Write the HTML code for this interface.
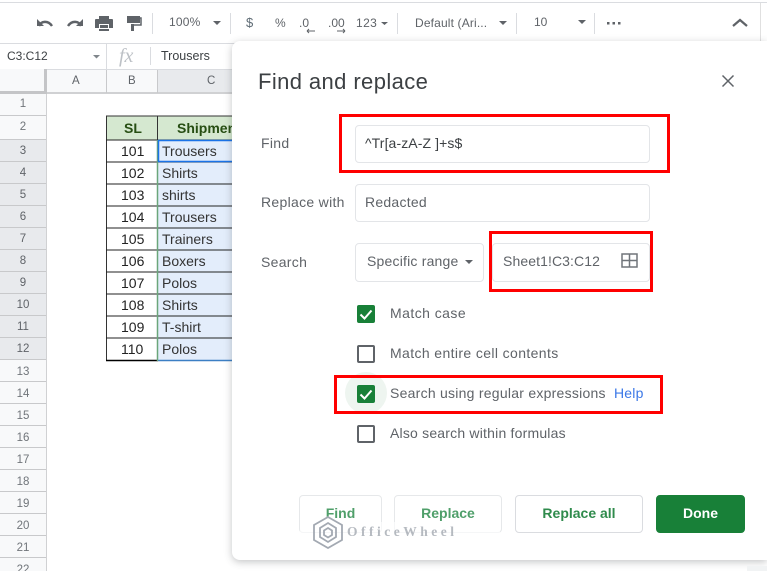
<!DOCTYPE html>
<html style="overflow:hidden;width:767px;height:571px"><head><meta charset="utf-8">
<style>
html,body{margin:0;padding:0}
#p{width:767px;height:571px;overflow:hidden;position:relative;background:#fff;font-family:"Liberation Sans",sans-serif;color:#3c4043;filter:blur(.35px)}
body{width:767px;height:571px;overflow:hidden}
.a,.t{position:absolute}
.t{white-space:nowrap;line-height:16px}
.rn{position:absolute;left:0;width:46px;background:#f8f9fa;border-bottom:1px solid #c8c9cb;box-sizing:border-box;text-align:center;font-size:11.5px;color:#70757a}
.rs{background:#e8eaed;color:#5f6368}
.box{position:absolute;background:#fff;border:1px solid #e3e5e8;border-radius:4px;box-sizing:border-box}
.red{position:absolute;border:3px solid #f00;box-sizing:border-box}
.lbl{font-size:14px;color:#5f6368;letter-spacing:.3px}
.cb{position:absolute;left:357px;width:18px;height:18px;box-sizing:border-box;border-radius:2px}
.on{background:#188038}
.off{border:2px solid #5f6368;background:#fff}
.btn{position:absolute;top:495px;height:38px;box-sizing:border-box;background:#fff;border:1px solid #dadce0;border-radius:4px;text-align:center;font-size:14px;font-weight:bold;color:#2f8b4c;line-height:35px}
.s{position:absolute;top:13px;width:1px;height:21px;background:#dadce0}
.tb{font-size:12px;color:#5f6368}
</style></head><body><div id="p">

<!-- toolbar -->
<div class="a" style="left:0;top:2px;width:767px;height:1px;background:#dadce0"></div>
<div class="a" style="left:760px;top:3px;width:1px;height:38px;background:#e0e0e0"></div>
<svg class="a" style="left:0;top:0" width="767" height="44" fill="none">
<path d="M39 26 C41 21 48 20 52 26" stroke="#5f6368" stroke-width="2.400"/><path d="M37 19v7h7z" fill="#5f6368"/>
<path d="M81 26 C79 21 72 20 68 26" stroke="#5f6368" stroke-width="2.400"/><path d="M83 19v7h-7z" fill="#5f6368"/>
<path d="M99 16h10v3h3a1 1 0 0 1 1 1v8h-4v3H99v-3h-4v-8a1 1 0 0 1 1-1h3z" fill="#5f6368"/><path d="M99 24h10v5H99z" fill="#fff"/><path d="M100 25h8v3h-8z" fill="#5f6368"/>
<path d="M127 16h13v7h-13z M131 24h3v7h-3z" fill="#5f6368"/><path d="M140 18h1v7h-8" stroke="#5f6368" stroke-width="1.500"/>
<path d="M213 21h8l-4 4z M381 22h7l-3.500 3z M499 21h8l-4 4z M578 20h8l-4 4z" fill="#5f6368"/>
<path d="M733 26l7-6 7 6" stroke="#5f6368" stroke-width="2.200"/>
<path d="M607 22h2.500v2.500h-2.500z M612.500 22h2.500v2.500h-2.500z M618 22h2.500v2.500h-2.500z" fill="#5f6368"/>
<path d="M307 31h8M307 31l2-2M307 31l2 2M337 31h8M345 31l-2-2M345 31l-2 2" stroke="#5f6368"/>
</svg>
<div class="s" style="left:152px"></div><div class="s" style="left:230px"></div><div class="s" style="left:397px"></div><div class="s" style="left:516px"></div><div class="s" style="left:594px"></div>
<div class="t tb" style="left:169px;top:14px;letter-spacing:.2px">100%</div>
<div class="t tb" style="left:246px;top:15px;font-size:13px;color:#5f6c75">$</div>
<div class="t tb" style="left:275px;top:15px">%</div>
<div class="t tb" style="left:299px;top:15px">.0</div>
<div class="t tb" style="left:328px;top:15px">.00</div>
<div class="t tb" style="left:356px;top:15px;letter-spacing:.4px">123</div>
<div class="t tb" style="left:415px;top:15px;letter-spacing:.15px">Default (Ari...</div>
<div class="t tb" style="left:534px;top:14px">10</div>

<!-- formula bar -->
<div class="a" style="left:0;top:43px;width:240px;height:1px;background:#dadce0"></div>
<div class="t" style="left:7px;top:48px;font-size:12px;color:#3c4043">C3:C12</div>
<svg class="a" style="left:92px;top:54px" width="10" height="6"><path d="M1 1h7l-3.500 3.500z" fill="#80868b"/></svg>
<div class="a" style="left:106px;top:44px;width:1px;height:25px;background:#dadce0"></div>
<div class="t" style="left:119px;top:46px;font-size:20px;line-height:20px;font-family:'Liberation Serif',serif;font-style:italic;color:#bdc1c6">fx</div>
<div class="a" style="left:150px;top:47px;width:1px;height:18px;background:#dadce0"></div>
<div class="t" style="left:161px;top:48px;font-size:12.500px;color:#3c4043">Trousers</div>

<!-- column headers -->
<div class="a" style="left:0;top:69px;width:240px;height:25px;background:#f8f9fa;border-top:1px solid #dadce0;border-bottom:2px solid #d0d1d3;box-sizing:border-box"></div>
<div class="a" style="left:0;top:69px;width:47px;height:25px;background:#f8f9fa;border-right:3px solid #c4c5c7;border-bottom:3px solid #c4c5c7;box-sizing:border-box"></div>
<div class="a" style="left:158px;top:70px;width:82px;height:22px;background:#e8eaed"></div>
<div class="a" style="left:106px;top:70px;width:1px;height:23px;background:#c8c9cb"></div>
<div class="a" style="left:157px;top:70px;width:1px;height:23px;background:#c8c9cb"></div>
<div class="t" style="left:72px;top:73px;font-size:11.500px;color:#5f6368">A</div>
<div class="t" style="left:128px;top:73px;font-size:11.500px;color:#5f6368">B</div>
<div class="t" style="left:207px;top:73px;font-size:11.500px;color:#5f6368">C</div>

<!-- row headers -->
<div class="a" style="left:46px;top:94px;width:1px;height:477px;background:#d0d1d3"></div>
<div class="rn" style="top:94px;height:22px;line-height:21px">1</div>
<div class="rn" style="top:116px;height:24px;line-height:23px">2</div>
<div class="rn rs" style="top:140px;height:22px;line-height:23px">3</div>
<div class="rn rs" style="top:162px;height:22px;line-height:23px">4</div>
<div class="rn rs" style="top:184px;height:22px;line-height:23px">5</div>
<div class="rn rs" style="top:206px;height:22px;line-height:23px">6</div>
<div class="rn rs" style="top:228px;height:22px;line-height:23px">7</div>
<div class="rn rs" style="top:250px;height:22px;line-height:23px">8</div>
<div class="rn rs" style="top:272px;height:22px;line-height:23px">9</div>
<div class="rn rs" style="top:294px;height:22px;line-height:23px">10</div>
<div class="rn rs" style="top:316px;height:22px;line-height:23px">11</div>
<div class="rn rs" style="top:338px;height:22px;line-height:23px">12</div>
<div class="rn" style="top:360px;height:22px;line-height:24px">13</div>
<div class="rn" style="top:382px;height:22px;line-height:24px">14</div>
<div class="rn" style="top:404px;height:22px;line-height:24px">15</div>
<div class="rn" style="top:426px;height:22px;line-height:24px">16</div>
<div class="rn" style="top:448px;height:22px;line-height:24px">17</div>
<div class="rn" style="top:470px;height:22px;line-height:24px">18</div>
<div class="rn" style="top:492px;height:22px;line-height:24px">19</div>
<div class="rn" style="top:514px;height:22px;line-height:24px">20</div>
<div class="rn" style="top:536px;height:22px;line-height:24px">21</div>
<div class="rn" style="top:558px;height:13px;line-height:24px;overflow:hidden;border:0">22</div>

<!-- table -->
<div class="a" style="left:106px;top:116px;width:134px;height:24px;background:#d5e8d0"></div>
<div class="a" style="left:158px;top:140px;width:82px;height:220px;background:#e3edfb"></div>
<svg class="a" style="left:106px;top:115px" width="134" height="248">
<path d="M0 1h134M.5 1v245M51.500 1v24" stroke="#333" stroke-width="1"/>
<path d="M0 25h134M0 47h134M0 69h134M0 91h134M0 113h134M0 135h134M0 157h134M0 179h134M0 201h134M0 223h134" stroke="#222" stroke-width="1"/>
<path d="M0 245.500h52" stroke="#000" stroke-width="1.500"/>
<path d="M52 245.500h82" stroke="#3c7fc4" stroke-width="1.500"/>
<path d="M51.500 25v221" stroke="#6aa67a" stroke-width="1.500"/>
<rect x="52.500" y="25.500" width="90" height="21" fill="none" stroke="#1a73e8" stroke-width="1.500"/>
</svg>
<div class="t" style="left:124px;top:120px;font-size:14px;font-weight:bold;color:#274e13">SL</div>
<div class="t" style="left:177px;top:120px;font-size:14px;font-weight:bold;color:#274e13">Shipment</div>
<div class="t" style="left:121px;top:143px;font-size:14px;color:#222">101</div>
<div class="t" style="left:121px;top:165px;font-size:14px;color:#222">102</div>
<div class="t" style="left:121px;top:187px;font-size:14px;color:#222">103</div>
<div class="t" style="left:121px;top:209px;font-size:14px;color:#222">104</div>
<div class="t" style="left:121px;top:231px;font-size:14px;color:#222">105</div>
<div class="t" style="left:121px;top:253px;font-size:14px;color:#222">106</div>
<div class="t" style="left:121px;top:275px;font-size:14px;color:#222">107</div>
<div class="t" style="left:121px;top:297px;font-size:14px;color:#222">108</div>
<div class="t" style="left:121px;top:319px;font-size:14px;color:#222">109</div>
<div class="t" style="left:121px;top:341px;font-size:14px;color:#222">110</div>
<div class="t" style="left:162px;top:143px;font-size:14px;color:#333">Trousers</div>
<div class="t" style="left:162px;top:165px;font-size:14px;color:#333">Shirts</div>
<div class="t" style="left:162px;top:187px;font-size:14px;color:#333">shirts</div>
<div class="t" style="left:162px;top:209px;font-size:14px;color:#333">Trousers</div>
<div class="t" style="left:162px;top:231px;font-size:14px;color:#333">Trainers</div>
<div class="t" style="left:162px;top:253px;font-size:14px;color:#333">Boxers</div>
<div class="t" style="left:162px;top:275px;font-size:14px;color:#333">Polos</div>
<div class="t" style="left:162px;top:297px;font-size:14px;color:#333">Shirts</div>
<div class="t" style="left:162px;top:319px;font-size:14px;color:#333">T-shirt</div>
<div class="t" style="left:162px;top:341px;font-size:14px;color:#333">Polos</div>

<!-- dialog -->
<div class="a" style="left:232px;top:41px;width:535px;height:519px;background:#fff;border-radius:8px 0 0 8px;box-shadow:0 2px 8px rgba(60,64,67,.3)"></div>
<div class="a" style="left:747px;top:566px;width:20px;height:5px;background:#f1f3f4"></div>
<div class="t" style="left:258px;top:68px;font-size:22px;line-height:28px;color:#3c4043;letter-spacing:.4px">Find and replace</div>
<svg class="a" style="left:720px;top:73px" width="16" height="16"><path d="M2.500 2.500l11 11M13.500 2.500l-11 11" stroke="#5f6368" stroke-width="1.500"/></svg>

<div class="t lbl" style="left:261px;top:135px">Find</div>
<div class="box" style="left:355px;top:125px;width:295px;height:38px"></div>
<div class="t" style="left:365px;top:135px;font-size:14px;color:#3c4043;letter-spacing:.1px">^Tr[a-zA-Z ]+s$</div>
<div class="t lbl" style="left:261px;top:194px">Replace with</div>
<div class="box" style="left:355px;top:184px;width:295px;height:38px"></div>
<div class="t" style="left:365px;top:194px;font-size:14px;color:#5f6368;letter-spacing:.25px">Redacted</div>
<div class="t lbl" style="left:261px;top:254px">Search</div>
<div class="box" style="left:355px;top:243px;width:129px;height:39px"></div>
<div class="t" style="left:367px;top:253px;font-size:14px;color:#5f6368;letter-spacing:.2px">Specific range</div>
<svg class="a" style="left:464px;top:259px" width="10" height="6"><path d="M1 1h8l-4 4z" fill="#5f6368"/></svg>
<div class="box" style="left:492px;top:243px;width:158px;height:39px"></div>
<div class="t" style="left:503px;top:253px;font-size:14px;color:#5f6368;letter-spacing:.1px">Sheet1!C3:C12</div>
<svg class="a" style="left:621px;top:253px" width="17" height="15" fill="none"><rect x="1" y="1" width="15" height="13" stroke="#70757a" stroke-width="1.500"/><path d="M8.500 1v13M1 7.500h15" stroke="#70757a" stroke-width="1.500"/></svg>

<div class="cb on" style="top:305px"></div>
<div class="cb off" style="top:345px"></div>
<div class="a" style="left:345px;top:372px;width:42px;height:42px;border-radius:50%;background:#eef5f0"></div>
<div class="cb on" style="top:385px"></div>
<div class="cb off" style="top:425px"></div>
<svg class="a" style="left:357px;top:305px" width="18" height="18" fill="none"><path d="M3.500 9.500l4 4 7-8" stroke="#fff" stroke-width="2"/></svg>
<svg class="a" style="left:357px;top:385px" width="18" height="18" fill="none"><path d="M3.500 9.500l4 4 7-8" stroke="#fff" stroke-width="2"/></svg>
<div class="t lbl" style="left:390px;top:305px;letter-spacing:.45px">Match case</div>
<div class="t lbl" style="left:390px;top:345px;letter-spacing:.38px">Match entire cell contents</div>
<div class="t lbl" style="left:390px;top:385px;letter-spacing:.25px">Search using regular expressions</div>
<div class="t" style="left:614px;top:385px;font-size:14px;color:#3b78e7;letter-spacing:.2px">Help</div>
<div class="t lbl" style="left:390px;top:425px;letter-spacing:.2px">Also search within formulas</div>

<!-- red frames -->
<div class="red" style="left:339px;top:114px;width:331px;height:59px"></div>
<div class="red" style="left:489px;top:231px;width:164px;height:61px"></div>
<div class="red" style="left:334px;top:375px;width:329px;height:39px"></div>

<!-- buttons -->
<div class="btn" style="left:299px;width:83px;color:#4f9f6a;border-color:#e6e8ea">Find</div>
<div class="btn" style="left:394px;width:108px;color:#4f9f6a;border-color:#e6e8ea">Replace</div>
<div class="btn" style="left:515px;width:128px">Replace all</div>
<div class="btn" style="left:656px;width:89px;background:#188038;border-color:#188038;color:#fff">Done</div>

<!-- watermark -->
<div class="a" style="left:300px;top:522px;width:200px;height:11px;background:#fff;opacity:.6"></div>
<svg class="a" style="left:312px;top:515px" width="32" height="34" fill="none" stroke="#a3a9b2" stroke-width="1.800"><path d="M16 2L30 10V25L16 33L2 25V10Z"/><path d="M16 8L24 13V22L16 27L8 22V13Z"/><path d="M16 13L20 15.500V20L16 22.500L12 20V15.500Z"/></svg>
<div class="t" style="left:347px;top:524px;font-size:13.500px;font-family:'Liberation Serif',serif;font-weight:bold;letter-spacing:3.500px;color:#a9aeb6;opacity:.85">OfficeWheel</div>
</div></body></html>
